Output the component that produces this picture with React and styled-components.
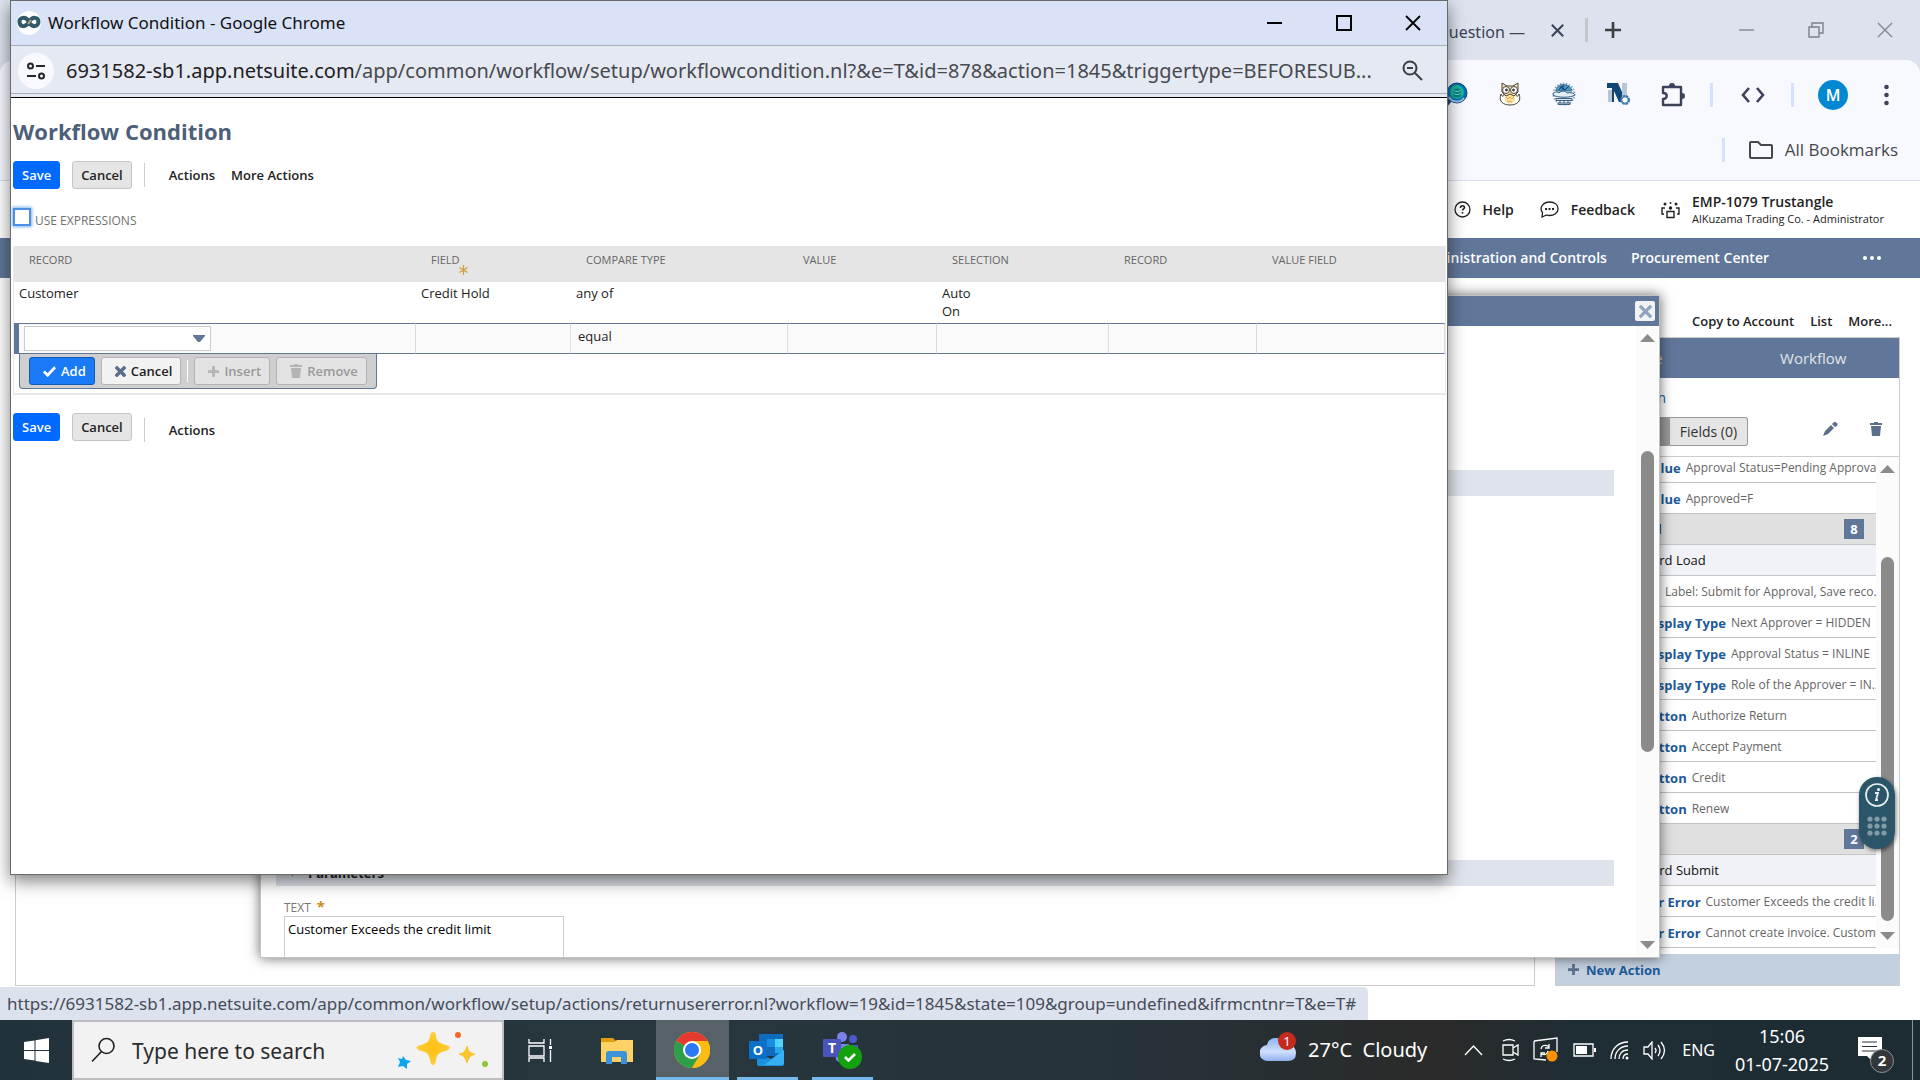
import React from "react";
import styled, { createGlobalStyle } from "styled-components";

const slate = "#607799";
const systemFont = '"Noto Sans", "Open Sans", sans-serif';

const GlobalStyle = createGlobalStyle`
  *, *::before, *::after { box-sizing: border-box; }
  html, body, #root { height: 100%; margin: 0; }
  body { overflow: hidden; background: #fff; color: #222; font: 13px/20px "Open Sans", "Noto Sans", sans-serif; }
  button, input, select, textarea { font: inherit; color: inherit; margin: 0; }
  button { cursor: pointer; }
  svg { display: block; flex: none; }
`;

/* ---------- shared ---------- */
const Desktop = styled.main`
  position: relative;
  display: flex;
  flex-direction: column;
  height: 100%;
  overflow: hidden;
`;

const PlainButton = styled.button`
  display: inline-flex;
  align-items: center;
  justify-content: center;
  padding: 0;
  border: 0;
  background: none;
`;

const TextLink = styled.a`
  color: ${(p) => p.$color || "#222"};
  font-size: ${(p) => p.$size || 13}px;
  font-weight: ${(p) => p.$weight || 600};
  text-decoration: none;
  white-space: nowrap;
`;

const Track = styled.div`
  display: flex;
  flex-direction: column;
  align-items: center;
  flex: none;
  width: 23px;
  padding: 8px 0;
  background: #fbfbfb;
`;
const Thumb = styled.div`
  width: 13px;
  flex: ${(p) => p.$grow} 1 0;
  border-radius: 7px;
  background: #8b8b8b;
`;
const Gap = styled.div`
  flex: ${(p) => p.$grow} 1 0;
`;
const Arrow = ({ down }) => (
  <svg width="15" height="8" viewBox="0 0 15 8">
    <path d={down ? "M0 0h15L7.500 8z" : "M0 8h15L7.500 0z"} fill="#8b8b8b" />
  </svg>
);
const Scrollbar = ({ before, thumb, after }) => (
  <Track>
    <Arrow />
    <Gap $grow={before} />
    <Thumb $grow={thumb} />
    <Gap $grow={after} />
    <Arrow down />
  </Track>
);

/* ---------- main browser ---------- */
const Browser = styled.section`
  position: relative;
  display: flex;
  flex-direction: column;
  flex: 1;
  min-height: 0;
  background: #dde2ee;
`;
const TabStrip = styled.div`
  display: flex;
  align-items: center;
  justify-content: flex-end;
  height: 60px;
  padding-right: 27px;
  color: #3c4257;
`;
const TabTitle = styled.span`
  margin-right: 26px;
  padding-top: 3px;
  font-family: ${systemFont};
  font-size: 16px;
`;
const StripDivider = styled.span`
  width: 3px;
  height: 24px;
  margin: 0 17px 0 21px;
  background: #c4c6cb;
`;
const WindowButtons = styled.div`
  display: flex;
  gap: 53px;
  margin-left: 118px;
`;
const Chrome = styled.div`
  display: flex;
  flex-direction: column;
  height: 121px;
  border-bottom: 1px solid #dcdfec;
  border-radius: 14px 14px 0 0;
  background: #f8f9ff;
`;
const ToolRow = styled.div`
  display: flex;
  align-items: center;
  justify-content: flex-end;
  height: 70px;
  padding-right: 31px;
`;
const Extensions = styled.div`
  display: flex;
  gap: 30px;
  margin-right: 24px;
`;
const BlueDivider = styled.span`
  width: 3px;
  height: 24px;
  background: #d3e3fd;
`;
const DevTools = styled(PlainButton)`
  margin: 0 26px 0 28px;
`;
const Avatar = styled(PlainButton)`
  width: 30px;
  height: 30px;
  margin: 0 36px 0 24px;
  border-radius: 50%;
  background: #0288d1;
  color: #fff;
  font-size: 16px;
  font-weight: 600;
`;
const BookmarkRow = styled.div`
  display: flex;
  align-items: center;
  justify-content: flex-end;
  height: 40px;
  padding-right: 22px;
`;
const BookmarkButton = styled(PlainButton)`
  gap: 12px;
  margin-left: 24px;
  color: #45474c;
  font-size: 17px;
`;
const AppHeader = styled.header`
  display: flex;
  align-items: center;
  justify-content: flex-end;
  gap: 26px;
  height: 57px;
  padding-right: 36px;
  background: #fff;
`;
const HeaderItem = styled(PlainButton)`
  gap: 12px;
  font-size: 14px;
  font-weight: 600;
  text-align: left;
`;
const Account = styled.span`
  display: flex;
  flex-direction: column;
  font-weight: 600;
  line-height: 17px;
`;
const Role = styled.small`
  font-size: 11px;
  font-weight: 400;
  line-height: 17px;
`;
const Nav = styled.nav`
  display: flex;
  align-items: center;
  justify-content: flex-end;
  gap: 24px;
  height: 40px;
  padding-right: 39px;
  background: ${slate};
`;
const NavMore = styled(PlainButton)`
  margin-left: 70px;
`;
const Page = styled.div`
  display: flex;
  flex-direction: column;
  flex: 1;
  min-height: 0;
  padding: 0 20px 34px 15px;
  background: #fff;
`;
const PageLinks = styled.div`
  display: flex;
  align-items: flex-end;
  justify-content: flex-end;
  gap: 16px;
  height: 59px;
  padding: 0 8px 6px 0;
`;
const Columns = styled.div`
  display: grid;
  grid-template-columns: 1fr 345px;
  gap: 20px;
  flex: 1;
  min-height: 0;
`;
const Canvas = styled.div`
  border: 1px solid #ccc;
`;
const SidePanel = styled.aside`
  display: flex;
  flex-direction: column;
  min-height: 0;
  border: 1px solid #ccc;
`;
const PanelTabs = styled.div`
  display: grid;
  grid-template-columns: 1fr 1fr;
  height: 40px;
  background: ${slate};
`;
const PanelTab = styled(PlainButton)`
  padding-left: ${(p) => (p.$active ? 6 : 0)}px;
  color: ${(p) => (p.$active ? "#e3c08a" : "#e4e4e4")};
  font-size: 15px;
`;
const PanelTop = styled.div`
  display: flex;
  flex-direction: column;
  height: 79px;
  padding: 10px 17px 10px 28px;
  border-bottom: 1px solid #ccc;
`;
const PanelLink = styled(TextLink)`
  padding-left: 4px;
`;
const PanelTools = styled.div`
  display: flex;
  align-items: center;
  margin-top: 9px;
`;
const Segment = styled.button`
  width: ${(p) => p.$width}px;
  height: 29px;
  padding: 0;
  border: 1px solid #999;
  border-radius: ${(p) => (p.$on ? "3px 0 0 3px" : "0 3px 3px 0")};
  border-left-width: ${(p) => (p.$on ? 1 : 0)}px;
  background: ${(p) => (p.$on ? "#999" : "#e5e5e5")};
  color: ${(p) => (p.$on ? "#fff" : "#333")};
  font-size: 14px;
`;
const ToolIcons = styled.div`
  display: flex;
  gap: 32px;
  margin: 0 0 5px auto;
`;
const ListArea = styled.div`
  display: flex;
  height: 491px;
  min-height: 0;
`;
const List = styled.ul`
  display: flex;
  flex-direction: column;
  justify-content: flex-end;
  flex: 1;
  min-width: 0;
  margin: 0;
  padding: 0;
  overflow: hidden;
  list-style: none;
`;
const listKinds = { item: "#fff", state: "#e0e0e0", event: "#f0f2f7" };
const ListRow = styled.li`
  display: flex;
  align-items: center;
  gap: 5px;
  flex: none;
  height: 31px;
  padding: ${(p) => (p.$kind === "item" ? "1px 0 0 30px" : "0 0 0 30px")};
  border-bottom: 1px solid #c4c4c4;
  background: ${(p) => listKinds[p.$kind]};
  color: #111;
`;
const ActionLink = styled.a`
  flex: none;
  color: #1c5a99;
  font-weight: 700;
  text-decoration: none;
`;
const ActionNote = styled.span`
  margin-right: -8px;
  overflow: hidden;
  color: #666;
  font-size: 12px;
  text-overflow: ellipsis;
  white-space: nowrap;
`;
const Count = styled.span`
  width: 20px;
  margin: 0 12px 0 auto;
  background: ${slate};
  color: #fff;
  font-weight: 700;
  text-align: center;
`;
const NewAction = styled(PlainButton)`
  justify-content: flex-start;
  gap: 7px;
  height: 31px;
  margin-top: auto;
  padding-left: 12px;
  background: #c3d0df;
  color: #1c5a99;
  font-weight: 700;
`;
const HelpPill = styled(PlainButton)`
  position: absolute;
  right: 25px;
  bottom: 171px;
  flex-direction: column;
  gap: 9px;
  width: 36px;
  height: 72px;
  padding-bottom: 8px;
  border-radius: 18px;
  background: #2b5568;
  box-shadow: 1px 2px 4px rgba(0, 0, 0, 0.5);
`;
const StatusBubble = styled.div`
  position: absolute;
  left: 0;
  bottom: 0;
  height: 33px;
  padding: 0 12px 0 7px;
  border-top-right-radius: 5px;
  background: #dce2ee;
  color: #474b57;
  font-family: ${systemFont};
  font-size: 17px;
  line-height: 34px;
  white-space: nowrap;
`;

/* ---------- action dialog ---------- */
const Dialog = styled.section`
  position: absolute;
  top: 295px;
  right: 260px;
  bottom: 122px;
  left: 260px;
  display: flex;
  flex-direction: column;
  border: 1px solid #c4c4c4;
  background: #fff;
  box-shadow: 0 0 12px rgba(0, 0, 0, 0.6);
`;
const DialogBar = styled.header`
  display: flex;
  align-items: center;
  justify-content: flex-end;
  height: 30px;
  padding-right: 4px;
  background: ${slate};
`;
const DialogClose = styled(PlainButton)`
  width: 20px;
  height: 20px;
  border-radius: 2px;
  background: #f2f2f2;
`;
const DialogBody = styled.div`
  display: flex;
  flex: 1;
  min-height: 0;
`;
const DialogForm = styled.div`
  flex: 1;
  padding: 144px 22px 0 15px;
  overflow: hidden;
`;
const SectionBar = styled.h2`
  display: flex;
  align-items: center;
  gap: 11px;
  height: 26px;
  margin: 0 0 ${(p) => p.$after}px;
  padding-left: 12px;
  background: #dfe3eb;
  font-size: 13px;
  font-weight: 700;
`;
const FieldLabel = styled.label`
  display: block;
  height: 20px;
  padding-left: 8px;
  color: #777;
  font-size: 12px;
`;
const Required = styled.span`
  margin-left: 6px;
  color: #cf8a1d;
  font-size: 15px;
  font-weight: 700;
`;
const MessageBox = styled.textarea`
  display: block;
  width: 280px;
  height: 80px;
  margin-left: 8px;
  padding: 2px 3px;
  border: 1px solid #ccc;
  outline: 0;
  color: #000;
  resize: none;
`;

/* ---------- pop-up window ---------- */
const Popup = styled.section`
  position: absolute;
  top: 0;
  left: 10px;
  display: flex;
  flex-direction: column;
  width: 1438px;
  height: 875px;
  border: 1px solid #6a6a6a;
  background: #fff;
  box-shadow: 0 6px 16px rgba(0, 0, 0, 0.5);
`;
const TitleBar = styled.header`
  display: flex;
  align-items: center;
  gap: 7px;
  height: 45px;
  padding: 0 26px 0 6px;
  border-bottom: 1px solid #a9adb5;
  background: #d9e2f7;
  color: #111;
  font-family: ${systemFont};
  font-size: 17px;
`;
const TitleButtons = styled.div`
  display: flex;
  gap: 53px;
  margin-left: auto;
`;
const AddressBar = styled.div`
  display: flex;
  align-items: center;
  gap: 12px;
  height: 52px;
  padding: 0 24px 2px 7px;
  border-bottom: 1px solid #000;
  background: #e5e9f2;
  box-shadow: inset 0 -3px #e5e9f2, inset 0 -4px #a9adb5;
`;
const SiteInfo = styled(PlainButton)`
  width: 36px;
  height: 36px;
  border-radius: 50%;
  background: #f8f9ff;
`;
const Address = styled.div`
  flex: 1;
  overflow: hidden;
  color: #474a50;
  font-family: ${systemFont};
  font-size: 20px;
  line-height: 28px;
  text-overflow: ellipsis;
  white-space: nowrap;
`;
const Host = styled.span`
  color: #1f2024;
`;
const PopupPage = styled.div`
  padding: 17px 1px 0 2px;
`;
const Heading = styled.h1`
  margin: 0 0 14px;
  color: #4d5f79;
  font-size: 22px;
  font-weight: 700;
  line-height: 32px;
`;
const Actions = styled.div`
  display: flex;
  align-items: center;
  height: 28px;
`;
const FormButton = styled.button`
  height: 28px;
  margin-right: 12px;
  padding: 0 8px;
  border: 1px solid ${(p) => (p.$primary ? "#0069ff" : "#c4c4c4")};
  border-radius: 3px;
  background: ${(p) => (p.$primary ? "#0069ff" : "#e5e5e5")};
  color: ${(p) => (p.$primary ? "#fff" : "#222")};
  font-weight: 600;
`;
const MenuLinks = styled.div`
  display: flex;
  align-items: center;
  gap: 16px;
  height: 24px;
  margin-top: ${(p) => (p.$low ? 5 : 0)}px;
  padding-left: 24px;
  border-left: 1px solid #ccc;
`;
const ExpressionLabel = styled.label`
  display: flex;
  align-items: flex-start;
  gap: 4px;
  height: 38px;
  margin: 19px 0 0;
  color: #707070;
  font-size: 12px;
  line-height: 26px;
`;
const Tick = styled.input`
  appearance: none;
  width: 18px;
  height: 18px;
  border: 2px solid #4a90e2;
  background: #fff;
  box-shadow: 0 0 3px 1px #7fb5f0;
`;
const TableWrap = styled.div`
  border: 1px solid #e8e8e8;
  border-width: 0 1px 2px;
`;
const Table = styled.table`
  width: 100%;
  border-collapse: separate;
  border-spacing: 0;
  table-layout: fixed;
`;
const Col = styled.col`
  width: ${(p) => p.$width}px;
`;
const HeadCell = styled.th`
  height: 36px;
  padding: 4px 0 0 15px;
  background: #e5e5e5;
  color: #666;
  font-size: 11px;
  font-weight: 400;
  line-height: 20px;
  text-align: left;
  vertical-align: top;
`;
const HeadStar = styled.svg`
  margin: -5px 0 0 28px;
`;
const Cell = styled.td`
  height: 41px;
  padding: 2px 5px 0;
  line-height: 18px;
  vertical-align: top;
`;
const EditCell = styled.td`
  height: 31px;
  padding: ${(p) => (p.$first ? "0 5px" : "0 7px 6px")};
  border: 1px solid #dcdcdc;
  border-width: 1px 1px 1px 0;
  border-top-color: ${slate};
  border-bottom-color: ${slate};
  border-left: ${(p) => (p.$first ? `5px solid ${slate}` : "0")};
  background: #fafafa;
`;
const SelectWrap = styled.div`
  display: grid;
  width: 187px;
`;
const RecordSelect = styled.select`
  grid-area: 1 / 1;
  height: 25px;
  border: 1px solid #ccc;
  border-radius: 0;
  appearance: none;
  background: #fff;
`;
const SelectArrow = styled.svg`
  grid-area: 1 / 1;
  place-self: center end;
  margin-right: 6px;
  pointer-events: none;
`;
const RowTools = styled.div`
  display: inline-flex;
  align-items: center;
  gap: 6px;
  height: 35px;
  margin: 0 0 4px 5px;
  padding: 0 9px;
  border: 1px solid ${slate};
  border-top: 0;
  border-radius: 0 0 4px 4px;
  background: #cfcfcf;
  vertical-align: top;
`;
const toolStyles = {
  primary: ["#1a7af8", "#1158b7", "#fff"],
  normal: ["#f2f2f2", "#b5b5b5", "#222"],
  off: ["#e3e3e3", "#b3b3b3", "#999"],
};
const ToolButton = styled.button`
  display: inline-flex;
  align-items: center;
  gap: 5px;
  height: 28px;
  padding: 0 8px 0 13px;
  border: 1px solid ${(p) => toolStyles[p.$kind][1]};
  border-radius: 3px;
  background: ${(p) => toolStyles[p.$kind][0]};
  color: ${(p) => toolStyles[p.$kind][2]};
  font-weight: 600;
`;
const ToolRule = styled.span`
  width: 1px;
  height: 22px;
  background: #fff;
`;
const BottomActions = styled.div`
  margin-top: 18px;
`;

/* ---------- taskbar ---------- */
const Taskbar = styled.footer`
  display: flex;
  flex: none;
  height: 60px;
  background: linear-gradient(90deg, #22323c, #27373d 35%, #263238 60%, #2a2a29 75%, #1f2d34 82%, #1d2b33);
  color: #fff;
  font-family: ${systemFont};
`;
const StartButton = styled(PlainButton)`
  width: 72px;
`;
const SearchBox = styled.label`
  display: flex;
  align-items: center;
  gap: 16px;
  width: 432px;
  padding: 0 13px 0 16px;
  border: 2px solid #bdbdbd;
  background: #f2f2f2;
`;
const SearchInput = styled.input`
  flex: 1;
  min-width: 0;
  padding: 2px 0 0;
  border: 0;
  outline: 0;
  background: none;
  font-size: 21px;
  &::placeholder { color: #2b2b2b; opacity: 1; }
`;
const TaskButton = styled(PlainButton)`
  width: ${(p) => p.$width || 75}px;
  padding-right: ${(p) => (p.$open && !p.$active ? 0 : 2)}px;
  background: ${(p) =>
    p.$open
      ? `linear-gradient(#76b9ed, #76b9ed) bottom / ${p.$active ? "100%" : "61px"} 3px no-repeat ${p.$active ? "#566268" : "transparent"}`
      : "none"};
`;
const Tray = styled.div`
  display: flex;
  align-items: center;
  margin-left: auto;
`;
const Weather = styled(PlainButton)`
  gap: 11px;
  margin-right: 37px;
  font-size: 20px;
  white-space: pre;
`;
const TrayIcons = styled.div`
  display: flex;
  align-items: center;
  gap: 14px;
`;
const TrayArrow = styled(PlainButton)`
  margin-right: 5px;
`;
const Language = styled.span`
  margin: 0 20px 0 16px;
  font-size: 16px;
`;
const Clock = styled.time`
  display: flex;
  flex-direction: column;
  align-items: center;
  font-size: 18px;
  line-height: 28px;
`;
const NotificationButton = styled(PlainButton)`
  margin: 9px 0 0 28px;
`;
const ShowDesktop = styled.span`
  width: 8px;
  height: 60px;
  margin-left: 18px;
  border-left: 1px solid #8c9296;
`;

/* ---------- drawings ---------- */
const Minimize = ({ c = "#8a8d96" }) => (
  <svg width="16" height="16"><path d="M0 8h15" stroke={c} strokeWidth={c === "#000" ? 2 : 1.500} /></svg>
);
const Restore = () => (
  <svg width="16" height="16" fill="none" stroke="#7d808a" strokeWidth="1.400"><path d="M1 5h10v10H1zM4 5V1h11v10h-4" /></svg>
);
const Maximize = () => (
  <svg width="16" height="16" fill="none" stroke="#000" strokeWidth="2"><path d="M1 1h14v14H1z" /></svg>
);
const Close = ({ c = "#8a8d96", size = 16, w = 1.500 }) => (
  <svg width={size} height={size} viewBox="0 0 16 16"><path d="M1 1l14 14M15 1L1 15" stroke={c} strokeWidth={w} /></svg>
);
const Globe = () => (
  <svg width="24" height="24" viewBox="0 0 24 24">
    <path d="M8 16l-6 7" stroke="#154a77" strokeWidth="4" />
    <circle cx="13" cy="11" r="10" fill="#0a6db5" stroke="#17456e" strokeWidth="1" />
    <path d="M5 15a9 9 0 0 0 15 1" fill="none" stroke="#9cc4e4" strokeWidth="2" />
    <circle cx="13" cy="10" r="7" fill="#14b79a" />
    <path d="M9 8c2-2 6-2 8 0v6c-2 2-6 2-8 0z" fill="#0b7f86" />
    <path d="M9 8c2 2 6 2 8 0M9 11c2 2 6 2 8 0" stroke="#5fe0c0" fill="none" />
  </svg>
);
const Owl = () => (
  <svg width="24" height="24" viewBox="0 0 24 24" stroke="#4a4436" strokeWidth="1" fill="#fff">
    <path d="M3 12c-3 8 3 11 9 11s12-3 9-11c-1 3-3 3-3 0H6c0 3-2 3-3 0z" fill="#fff" />
    <path d="M7 13h10v6q-5 5-10 0z" fill="#fbe2a0" stroke="none" />
    <path d="M8 15l2 2 2-2 2 2 2-2M9 19l2 1 1-1 2 1" stroke="#e2a83a" fill="none" />
    <path d="M4 1l5 3h6l5-3v9l-4 4-4-2-4 2-4-4z" fill="#f9e6b5" />
    <circle cx="8" cy="8" r="3.500" /><circle cx="16" cy="8" r="3.500" />
    <circle cx="8.500" cy="8" r="1" fill="#222" /><circle cx="15.500" cy="8" r="1" fill="#222" />
    <path d="M11 11h2l-1 2z" fill="#e2a83a" stroke="none" />
  </svg>
);
const CloudGear = () => (
  <svg width="24" height="24" viewBox="0 0 24 24" fill="none" stroke="#3f6f94">
    <circle cx="12" cy="12" r="10.500" strokeDasharray="1.500 1.500" strokeWidth="2" stroke="#8ea9bd" />
    <path d="M4 9c0-8 14-9 16 0z" fill="#4d93c4" />
    <path d="M7 8l3-4M11 8V3M14 7l3-3M8 5l6 3" stroke="#123f68" />
    <path d="M1 13c0-3 4-4 6-2 2-3 7-2 8 0 4-1 7 0 8 2-4 3-18 3-22 0z" fill="#e3eff7" stroke="#2f5874" />
    <path d="M4 16.500h16v2H4zM6 21h12v1.500H6z" fill="#d5e4ee" stroke="#3c6380" />
    <path d="M8 18v3M12 18v3M16 18v3" stroke="#3c6380" />
  </svg>
);
const NLogo = () => (
  <svg width="24" height="24" viewBox="0 0 24 24">
    <path d="M16 1h5v13h-5z" fill="#b9c6d4" /><path d="M2 8h6v12H2z" fill="#b9c6d4" />
    <path d="M1 1h11l4 9V7 20h-3L8 9v11H6V6H1z" fill="#0e4677" />
    <circle cx="19" cy="18" r="4" fill="#f8f9ff" stroke="#3c77ad" strokeWidth="2" strokeDasharray="2.500 .7" /><circle cx="19" cy="18" r="3.300" fill="none" stroke="#3c77ad" />
  </svg>
);
const Puzzle = () => (
  <svg width="26" height="26" viewBox="0 0 26 26">
    <path d="M3 5h18v18H3v-6c5 0 5-6 0-6z" fill="none" stroke="#3c4257" strokeWidth="2.400" strokeLinejoin="round" />
    <path d="M9 4a3 3 0 0 1 6 0zM22 11a3 3 0 0 1 0 6z" fill="#3c4257" />
  </svg>
);
const Angles = () => (
  <svg width="24" height="16" viewBox="0 0 24 16" fill="none" stroke="#3c4257" strokeWidth="2.600"><path d="M8 1L2 8l6 7M16 1l6 7-6 7" /></svg>
);
const Kebab = () => (
  <svg width="5" height="22" fill="#3c4257"><circle cx="2.500" cy="3" r="2.300" /><circle cx="2.500" cy="11" r="2.300" /><circle cx="2.500" cy="19" r="2.300" /></svg>
);
const Folder = () => (
  <svg width="24" height="18" fill="none" stroke="#45474c" strokeWidth="2" strokeLinejoin="round"><path d="M1 2q0-1 1-1h7l3 3h10q1 0 1 1v11q0 1-1 1H2q-1 0-1-1z" /></svg>
);
const HelpIcon = () => (
  <svg width="17" height="17" viewBox="0 0 17 17" fill="none" stroke="#222" strokeWidth="1.300">
    <circle cx="8.500" cy="8.500" r="7.500" /><path d="M6.500 7q0-2.200 2-2.200t2 1.800c0 1.300-2 1.500-2 3M8.500 11v1.600" strokeWidth="1.600" />
  </svg>
);
const FeedbackIcon = () => (
  <svg width="19" height="17" viewBox="0 0 19 17" fill="none" stroke="#222" strokeWidth="1.300">
    <path d="M2.500 11.500C-1.500 6 4 1 9.500 1S18 4 18 8s-4 6.500-8.500 6.500c-1.500 0-2 0-3-.5L2 16z" />
    <path d="M5 8h2M8.500 8h2M12 8h2" strokeWidth="2" />
  </svg>
);
const RoleIcon = () => (
  <svg width="19" height="18" viewBox="0 0 19 18" fill="none" stroke="#222" strokeWidth="1.400">
    <path d="M6 10.500h7v6H6zM4 7H1v6h2M15 7h3v6h-2" />
    <circle cx="9.500" cy="7" r="1.700" fill="#222" stroke="none" /><circle cx="4" cy="3" r="1.500" fill="#222" stroke="none" /><circle cx="15" cy="3" r="1.500" fill="#222" stroke="none" /><circle cx="9.500" cy="2" r="1" fill="#222" stroke="none" />
  </svg>
);
const Dots = () => (
  <svg width="18" height="4" fill="#fff"><circle cx="2" cy="2" r="2" /><circle cx="9" cy="2" r="2" /><circle cx="16" cy="2" r="2" /></svg>
);
const Pencil = () => (
  <svg width="15" height="14" viewBox="0 0 15 14" fill="#5b6f8c"><path d="M0 14l2-5 6-6 3 3-6 6zM9 2l2-2q2 0 3 1t0 3l-2 1z" /></svg>
);
const Trash = ({ c = "#5b6f8c" }) => (
  <svg width="12" height="14" viewBox="0 0 12 14" fill={c}><path d="M0 1h4V0h4v1h4v2H0zM1 4h10l-1 10H2z" /></svg>
);
const Plus = ({ c = "#5b6f8c", size = 11, w = 3 }) => (
  <svg width={size} height={size} viewBox="0 0 12 12"><path d="M6 0v12M0 6h12" stroke={c} strokeWidth={w} /></svg>
);
const InfoIcon = () => (
  <svg width="24" height="24" viewBox="0 0 24 24" fill="none" stroke="#e8eef1">
    <circle cx="12" cy="12" r="11" strokeWidth="1.700" />
    <path d="M10 10h3l-2 7h2" strokeWidth="1.800" /><circle cx="13.500" cy="6.500" r="1.500" fill="#fff" stroke="none" />
  </svg>
);
const GridDots = () => (
  <svg width="20" height="20" fill="#829ba6">
    {[3, 10, 17].map((y) => [3, 10, 17].map((x) => <circle key={`${x}${y}`} cx={x} cy={y} r="2.600" />))}
  </svg>
);
const Favicon = () => (
  <svg width="24" height="24" viewBox="0 0 24 24" fill="none">
    <circle cx="12" cy="12" r="12" fill="#fff" />
    <path d="M12 11C9 5 2 6 2.500 11s6 6 9.500 0 9.500-5 9.500 0-7 6-9.500 0" stroke="#315a6b" strokeWidth="4" />
    <path d="M11 13l3-4" stroke="#b9a57a" strokeWidth="2" />
  </svg>
);
const Tune = () => (
  <svg width="18" height="18" viewBox="0 0 18 18" fill="none" stroke="#24272e" strokeWidth="2"><circle cx="3.500" cy="4" r="2.500" /><path d="M9 4h9M0 14h9" /><circle cx="14.500" cy="14" r="2.500" /></svg>
);
const ZoomOut = () => (
  <svg width="21" height="21" viewBox="0 0 21 21" fill="none" stroke="#3c4045" strokeWidth="2"><circle cx="8" cy="8" r="6.500" /><path d="M12.500 12.500L20 20M5 8h6" /></svg>
);
const Star = () => (
  <HeadStar width="9" height="10" viewBox="0 0 9 10"><path d="M4.500 0v10M.5 2.500l8 5M8.500 2.500l-8 5" stroke="#d39a3c" strokeWidth="1.200" /></HeadStar>
);
const Check = () => (
  <svg width="13" height="11" viewBox="0 0 14 11" fill="none" stroke="#fff" strokeWidth="3"><path d="M1 5.500l4 4L13 1" /></svg>
);
const WindowsLogo = () => (
  <svg width="25" height="25" viewBox="0 0 25 25" fill="#fff"><path d="M0 4l10.500-1.600V12H0zM11.500 2.200L25 0v12H11.500zM0 13h10.500v9.600L0 21zM11.500 13H25v12l-13.500-2z" /></svg>
);
const SearchGlass = () => (
  <svg width="26" height="26" viewBox="0 0 26 26" fill="none" stroke="#222" strokeWidth="1.600"><circle cx="16.500" cy="9" r="7.500" /><path d="M11.500 14.500L2 24.500" /></svg>
);
const Sparkles = () => (
  <svg width="92" height="40" viewBox="0 0 92 40">
    <defs><radialGradient id="gold"><stop offset="0" stopColor="#ffbf0f" /><stop offset="1" stopColor="#fbcf3e" /></radialGradient></defs>
    <path d="M36 2c2 0 3 1 3 4 1 6 3 7 10 9 5 1 5 4 0 6-7 1-9 3-10 9-1 7-5 7-6 0-1-6-3-8-9-9-6-2-6-5 0-6 6-2 8-3 9-9 1-3 1-4 3-4z" fill="url(#gold)" />
    <path d="M70 16c2 6 3 7 8 8-5 2-6 3-8 9-2-6-3-7-8-9 5-1 6-2 8-8z" fill="#fac62f" stroke="#fac62f" />
    <path d="M6 26l3 4 5 1-4 3v5l-4-3-5 1 2-5-2-4 4 1z" fill="#0ba5ef" />
    <circle cx="61" cy="5" r="3" fill="#f1662b" /><circle cx="88" cy="34" r="3" fill="#8dc63f" />
  </svg>
);
const TaskViewIcon = () => (
  <svg width="25" height="25" viewBox="0 0 25 25" fill="none" stroke="#fff" strokeWidth="1.300">
    <path d="M1 1v4h15V1M1 8h15v10H1zM1 24v-4h15v4M22.500 1v6M22.500 12v12" /><path d="M21 8h3v3h-3z" fill="#fff" stroke="none" />
  </svg>
);
const Explorer = () => (
  <svg width="32" height="27" viewBox="0 0 32 27">
    <path d="M0 1h12l3 3v6H0z" fill="#e19c10" /><path d="M0 5h13l3-2h16v22H0z" fill="#fcd266" />
    <path d="M5 27V17q0-3 3-3h15q3 0 3 3v10h-6v-7h-9v7z" fill="#3c93dc" />
  </svg>
);
const ChromeLogo = () => (
  <svg width="36" height="36" viewBox="0 0 36 36">
    <circle cx="18" cy="18" r="18" fill="#fbbc14" />
    <path d="M18 18L2.400 9A18 18 0 0 1 33.600 9z" fill="#e53a30" />
    <path d="M18 18L2.400 9A18 18 0 0 0 18 36l8-13.500z" fill="#2d9e4a" />
    <path d="M18 9h15.600A18 18 0 0 1 18 36l8-13z" fill="#fbbc14" />
    <circle cx="18" cy="18" r="9" fill="#fff" /><circle cx="18" cy="18" r="7" fill="#2b78f0" />
  </svg>
);
const LogoText = styled.text`
  fill: #fff;
  font: 700 ${(p) => p.$size}px "Open Sans", sans-serif;
  text-anchor: middle;
`;
const Outlook = () => (
  <svg width="36" height="32" viewBox="0 0 36 32">
    <path d="M10 0h24v22H10z" fill="#0f6cbd" /><path d="M18 5h8v8h-8z" fill="#1a8fe0" /><path d="M26 5h8v8h-8z" fill="#4fd3ff" /><path d="M26 13h8v6h-8z" fill="#28a8ea" />
    <path d="M8 18l14 7 13-9v14q0 2-2 2H10q-2 0-2-2z" fill="#1b90dd" /><path d="M35 16L15 31h18q2 0 2-2z" fill="#35b1f3" />
    <rect y="7" width="18" height="18" rx="1" fill="#0b70c9" /><LogoText x="9" y="21" $size={13}>O</LogoText>
  </svg>
);
const Teams = () => (
  <svg width="40" height="37" viewBox="0 0 40 37">
    <circle cx="19" cy="5" r="5" fill="#7b83eb" /><circle cx="30" cy="7" r="4" fill="#5059c9" /><path d="M24 13h11v10H24z" fill="#5059c9" /><path d="M11 12h15v16q-7 6-13 0z" fill="#7b83eb" />
    <rect y="7" width="18" height="18" rx="1" fill="#4b53bc" /><LogoText x="9" y="21" $size={14}>T</LogoText>
    <circle cx="27" cy="25" r="12" fill="#13a10e" /><path d="M22 25l3.500 3.500L32 22" stroke="#fff" strokeWidth="2.600" fill="none" />
  </svg>
);
const CloudIcon = () => (
  <svg width="37" height="36" viewBox="0 0 37 36">
    <defs><linearGradient id="sky" x2="0" y2="1"><stop offset="0" stopColor="#8fb2ee" /><stop offset=".6" stopColor="#cfdffb" /><stop offset="1" stopColor="#8fb0ef" /></linearGradient></defs>
    <path d="M8 29a8 8 0 0 1-1-16C8 5 20 3 24 12c8-1 12 4 12 9q0 8-8 8z" fill="url(#sky)" />
    <circle cx="27" cy="9" r="9" fill="#c42b1c" /><text x="27" y="14" textAnchor="middle" fill="#fff" fontSize="13">1</text>
  </svg>
);
const ChevronUp = () => (
  <svg width="19" height="12" fill="none" stroke="#fff" strokeWidth="1.400"><path d="M1 11l8.500-9L18 11" /></svg>
);
const MeetNow = () => (
  <svg width="17" height="24" viewBox="0 0 17 24" fill="none" stroke="#fff" strokeWidth="1.300"><path d="M1 7h10v10H1zM11 10l5-3v10l-5-3M1 3q6-3 12 0M1 21q6 3 12 0" /></svg>
);
const SyncIcon = () => (
  <svg width="26" height="26" viewBox="0 0 26 26" fill="none" stroke="#fff" strokeWidth="1.300">
    <path d="M1 4l23-3v14M1 4v18l12 1M8 12q1-5 7-3l1 2m0-4v4h-4M15 14q-1 5-7 3m0 3v-4h4" /><circle cx="19" cy="19" r="5.500" fill="#ff9100" stroke="none" />
  </svg>
);
const Battery = () => (
  <svg width="23" height="14"><path d="M1 1h19v12H1z" fill="none" stroke="#fff" strokeWidth="1.300" /><path d="M3 3h11v8H3zM21 5h2v4h-2z" fill="#fff" /></svg>
);
const Wifi = () => (
  <svg width="19" height="20" viewBox="0 0 19 20" fill="none" stroke="#fff" strokeWidth="1.300"><path d="M1 19C1 9 8 2 18 2M5 19C5 12 10 6 18 6M9 19c0-5 3-9 9-9M13 19c0-3 2-5 5-5" /><circle cx="17" cy="18" r="1.500" fill="#fff" stroke="none" /></svg>
);
const Volume = () => (
  <svg width="23" height="19" viewBox="0 0 23 19" fill="none" stroke="#fff" strokeWidth="1.300"><path d="M1 6h4l4-5v17l-4-5H1zM12 7q2 2.500 0 5M15 4q4 5.500 0 11M18 1q7 8.500 0 17" /></svg>
);
const Notifications = () => (
  <svg width="37" height="37" viewBox="0 0 37 37">
    <path d="M1 1h24v19h-9v6l-6-6H1z" fill="#fff" /><path d="M5 6h15M5 10.500h15M5 15h15" stroke="#26323a" strokeWidth="1.200" />
    <circle cx="25" cy="25" r="11.500" fill="#333739" stroke="#8a8f92" /><LogoText x="25" y="30" $size={15}>2</LogoText>
  </svg>
);

/* ---------- data ---------- */
const workflowRows = [
  ["item", "Set Field Value", "Approval Status=Pending Approval"],
  ["item", "Set Field Value", "Approved=F"],
  ["state", "On Approval", null, 8],
  ["event", "Before Record Load"],
  ["item", "Add Button", "Label: Submit for Approval, Save record first"],
  ["item", "Set Field Display Type", "Next Approver = HIDDEN"],
  ["item", "Set Field Display Type", "Approval Status = INLINE"],
  ["item", "Set Field Display Type", "Role of the Approver = INLINE"],
  ["item", "Remove Button", "Authorize Return"],
  ["item", "Remove Button", "Accept Payment"],
  ["item", "Remove Button", "Credit"],
  ["item", "Remove Button", "Renew"],
  ["state", "Submit", null, 2],
  ["event", "Before Record Submit"],
  ["item", "Return User Error", "Customer Exceeds the credit limit"],
  ["item", "Return User Error", "Cannot create invoice. Custom"],
];
const columns = [
  [402, "Record", "Customer"],
  [155, "Field", "Credit Hold"],
  [217, "Compare Type", "any of"],
  [149, "Value", ""],
  [172, "Selection", "Auto\nOn"],
  [148, "Record", ""],
  [188, "Value Field", ""],
];

const MainBrowser = () => (
  <Browser>
    <TabStrip>
      <TabTitle>Question —</TabTitle>
      <PlainButton aria-label="Close tab"><Close c="#3c4257" size={13} w={2.500} /></PlainButton>
      <StripDivider />
      <PlainButton aria-label="New tab"><Plus c="#3c4043" size={16} w={2} /></PlainButton>
      <WindowButtons>
        <PlainButton aria-label="Minimize"><Minimize /></PlainButton>
        <PlainButton aria-label="Restore"><Restore /></PlainButton>
        <PlainButton aria-label="Close"><Close /></PlainButton>
      </WindowButtons>
    </TabStrip>
    <Chrome>
      <ToolRow>
        <Extensions><Globe /><Owl /><CloudGear /><NLogo /><Puzzle /></Extensions>
        <BlueDivider />
        <DevTools aria-label="Developer tools"><Angles /></DevTools>
        <BlueDivider />
        <Avatar>M</Avatar>
        <PlainButton aria-label="Menu"><Kebab /></PlainButton>
      </ToolRow>
      <BookmarkRow>
        <BlueDivider />
        <BookmarkButton><Folder />All Bookmarks</BookmarkButton>
      </BookmarkRow>
    </Chrome>
    <AppHeader>
      <HeaderItem><HelpIcon />Help</HeaderItem>
      <HeaderItem><FeedbackIcon />Feedback</HeaderItem>
      <HeaderItem>
        <RoleIcon />
        <Account>EMP-1079 Trustangle<Role>AlKuzama Trading Co. - Administrator</Role></Account>
      </HeaderItem>
    </AppHeader>
    <Nav>
      <TextLink href="#" $color="#fff" $size={14}>Administration and Controls</TextLink>
      <TextLink href="#" $color="#fff" $size={14}>Procurement Center</TextLink>
      <NavMore aria-label="More centers"><Dots /></NavMore>
    </Nav>
    <Page>
      <PageLinks>
        <TextLink href="#">Copy to Account</TextLink>
        <TextLink href="#">List</TextLink>
        <TextLink href="#">More...</TextLink>
      </PageLinks>
      <Columns>
        <Canvas />
        <SidePanel>
          <PanelTabs>
            <PanelTab $active>State</PanelTab>
            <PanelTab>Workflow</PanelTab>
          </PanelTabs>
          <PanelTop>
            <PanelLink href="#" $color="#255599" $size={14} $weight={400}>State Action</PanelLink>
            <PanelTools>
              <Segment $on $width={86}>Actions</Segment>
              <Segment $width={78}>Fields (0)</Segment>
              <ToolIcons>
                <PlainButton aria-label="Edit"><Pencil /></PlainButton>
                <PlainButton aria-label="Delete"><Trash /></PlainButton>
              </ToolIcons>
            </PanelTools>
          </PanelTop>
          <ListArea>
            <List>
              {workflowRows.map(([kind, name, note, count], i) => (
                <ListRow key={i} $kind={kind}>
                  {kind === "item" ? <ActionLink href="#">{name}</ActionLink> : name}
                  {note && <ActionNote>{note}</ActionNote>}
                  {count && <Count>{count}</Count>}
                </ListRow>
              ))}
            </List>
            <Scrollbar before={83} thumb={362} after={11} />
          </ListArea>
          <NewAction><Plus />New Action</NewAction>
        </SidePanel>
      </Columns>
    </Page>
    <HelpPill aria-label="Guide"><InfoIcon /><GridDots /></HelpPill>
    <StatusBubble>https://6931582-sb1.app.netsuite.com/app/common/workflow/setup/actions/returnusererror.nl?workflow=19&amp;id=1845&amp;state=109&amp;group=undefined&amp;ifrmcntnr=T&amp;e=T#</StatusBubble>
  </Browser>
);

const ActionDialog = () => (
  <Dialog>
    <DialogBar>
      <DialogClose aria-label="Close"><Close c="#8fa3c0" size={13} w={4} /></DialogClose>
    </DialogBar>
    <DialogBody>
      <DialogForm>
        <SectionBar $after={364} />
        <SectionBar $after={10}>
          <svg width="9" height="6"><path d="M0 0h9L4.500 6z" fill="#222" /></svg>
          Parameters
        </SectionBar>
        <FieldLabel htmlFor="message">TEXT<Required>*</Required></FieldLabel>
        <MessageBox id="message" defaultValue="Customer Exceeds the credit limit" />
      </DialogForm>
      <Scrollbar before={108} thumb={300} after={188} />
    </DialogBody>
  </Dialog>
);

const ConditionWindow = () => (
  <Popup>
    <TitleBar>
      <Favicon />
      Workflow Condition - Google Chrome
      <TitleButtons>
        <PlainButton aria-label="Minimize"><Minimize c="#000" /></PlainButton>
        <PlainButton aria-label="Maximize"><Maximize /></PlainButton>
        <PlainButton aria-label="Close"><Close c="#000" w={1.800} /></PlainButton>
      </TitleButtons>
    </TitleBar>
    <AddressBar>
      <SiteInfo aria-label="Site information"><Tune /></SiteInfo>
      <Address>
        <Host>6931582-sb1.app.netsuite.com</Host>/app/common/workflow/setup/workflowcondition.nl?&amp;e=T&amp;id=878&amp;action=1845&amp;triggertype=BEFORESUB...
      </Address>
      <PlainButton aria-label="Zoom"><ZoomOut /></PlainButton>
    </AddressBar>
    <PopupPage>
      <Heading>Workflow Condition</Heading>
      <Actions>
        <FormButton $primary>Save</FormButton>
        <FormButton>Cancel</FormButton>
        <MenuLinks>
          <TextLink href="#">Actions</TextLink>
          <TextLink href="#">More Actions</TextLink>
        </MenuLinks>
      </Actions>
      <ExpressionLabel><Tick type="checkbox" />USE EXPRESSIONS</ExpressionLabel>
      <TableWrap>
        <Table>
          <colgroup>{columns.map(([w], i) => <Col key={i} $width={w} />)}</colgroup>
          <thead>
            <tr>{columns.map(([, name], i) => <HeadCell key={i}>{name.toUpperCase()}{name === "Field" && <Star />}</HeadCell>)}</tr>
          </thead>
          <tbody>
            <tr>
              {columns.map(([, , value], i) => (
                <Cell key={i}>{value.split("\n").map((line) => <div key={line}>{line}</div>)}</Cell>
              ))}
            </tr>
            <tr>
              <EditCell $first>
                <SelectWrap>
                  <RecordSelect aria-label="Record"><option></option></RecordSelect>
                  <SelectArrow width="12" height="7"><path d="M0 0h12v1L7 7H5L0 1z" fill={slate} /></SelectArrow>
                </SelectWrap>
              </EditCell>
              <EditCell />
              <EditCell>equal</EditCell>
              <EditCell /><EditCell /><EditCell /><EditCell />
            </tr>
          </tbody>
        </Table>
        <RowTools>
          <ToolButton $kind="primary"><Check />Add</ToolButton>
          <ToolButton $kind="normal"><Close c="#5b6f8c" size={11} w={5} />Cancel</ToolButton>
          <ToolRule />
          <ToolButton $kind="off" disabled><Plus c="#b5b5b5" />Insert</ToolButton>
          <ToolButton $kind="off" disabled><Trash c="#b5b5b5" />Remove</ToolButton>
        </RowTools>
      </TableWrap>
      <BottomActions>
        <Actions>
          <FormButton $primary>Save</FormButton>
          <FormButton>Cancel</FormButton>
          <MenuLinks $low><TextLink href="#">Actions</TextLink></MenuLinks>
        </Actions>
      </BottomActions>
    </PopupPage>
  </Popup>
);

const SystemTaskbar = () => (
  <Taskbar>
    <StartButton aria-label="Start"><WindowsLogo /></StartButton>
    <SearchBox>
      <SearchGlass />
      <SearchInput type="search" aria-label="Search" placeholder="Type here to search" />
      <Sparkles />
    </SearchBox>
    <TaskButton aria-label="Task view"><TaskViewIcon /></TaskButton>
    <TaskButton aria-label="File Explorer" $width={77}><Explorer /></TaskButton>
    <TaskButton aria-label="Google Chrome" $open $active $width={73}><ChromeLogo /></TaskButton>
    <TaskButton aria-label="Outlook" $open $width={76}><Outlook /></TaskButton>
    <TaskButton aria-label="Teams" $open><Teams /></TaskButton>
    <Tray>
      <Weather><CloudIcon />27°C  Cloudy</Weather>
      <TrayIcons>
        <TrayArrow aria-label="Show hidden icons"><ChevronUp /></TrayArrow>
        <MeetNow /><SyncIcon /><Battery /><Wifi /><Volume />
      </TrayIcons>
      <Language>ENG</Language>
      <Clock><span>15:06</span><span>01-07-2025</span></Clock>
      <NotificationButton aria-label="Notifications"><Notifications /></NotificationButton>
      <ShowDesktop />
    </Tray>
  </Taskbar>
);

export default function App() {
  return (
    <Desktop>
      <GlobalStyle />
      <MainBrowser />
      <ActionDialog />
      <ConditionWindow />
      <SystemTaskbar />
    </Desktop>
  );
}
